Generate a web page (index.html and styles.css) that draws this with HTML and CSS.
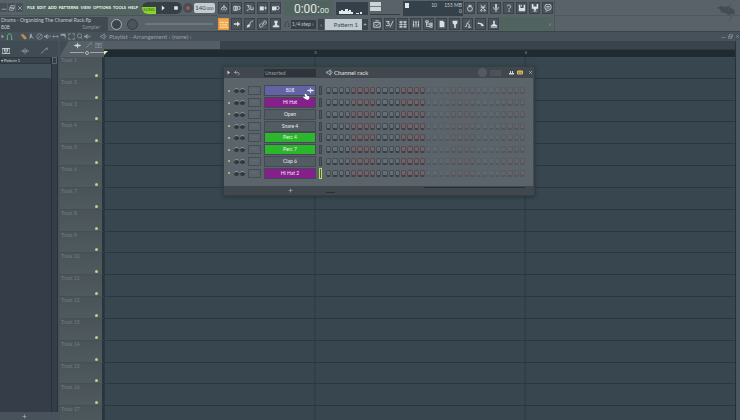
FILE: index.html
```
<!DOCTYPE html>
<html lang="en">
<head>
    <meta charset="UTF-8">
    <meta name="viewport" content="width=device-width, initial-scale=1.0">
    <title>Drums - Organizing The Channel Rack</title>
    <link rel="stylesheet" href="styles.css">
</head>
<body>
    <!-- shared icon shapes, all on a 10x10 grid -->
    <svg class="sprite" aria-hidden="true">
        <symbol id="i_metro" viewBox="0 0 10 10"><path d="M5 1v7M1 6l4-3 4 3M2 6l1 2M8 6L7 8"/></symbol>
        <symbol id="i_wait" viewBox="0 0 10 10"><path d="M1 3h4v5H1zM3 3v5"/><circle cx="7" cy="5" r="2"/></symbol>
        <symbol id="i_count" viewBox="0 0 10 10"><path d="M1 2h3L3 4c2 0 2 4-2 4M6 2v5M6 7h3V4"/></symbol>
        <symbol id="i_keys" viewBox="0 0 10 10"><path class="solid" d="M1 3h5v5H1z"/><path d="M7 5h3M8 3v4"/></symbol>
        <symbol id="i_loop" viewBox="0 0 10 10"><path class="solid" d="M0 3h5v5H0z"/><circle cx="7" cy="5" r="2"/></symbol>
        <symbol id="i_bars" viewBox="0 0 10 10"><path d="M0 3h5M6 3h4M0 6h2M3 6h6M0 9h10"/></symbol>
        <symbol id="i_arrow" viewBox="0 0 10 10"><path class="solid" d="M1 4h4V2l4 3-4 3V6H1z"/></symbol>
        <symbol id="i_slide" viewBox="0 0 10 10"><path d="M1 9c3 0 4-2 4-4s1-3 4-4"/><path class="solid" d="M1 7l3-2 1 3-3 1z"/></symbol>
        <symbol id="i_link" viewBox="0 0 10 10"><path d="M4 6l3-3M3 4L1 6c-1 2 1 4 3 2l2-2M4 4l2-2c2-2 4 0 3 2L7 6"/></symbol>
        <symbol id="i_stamp" viewBox="0 0 10 10"><path class="solid" d="M3 1h4v3H6l1 3h2v2H1V7h2l1-3H3z"/></symbol>
        <symbol id="i_power" viewBox="0 0 10 10"><circle cx="5" cy="6" r="3"/><path d="M5 1v3M3 2h4"/></symbol>
        <symbol id="i_cut" viewBox="0 0 10 10"><path d="M2 1l5 6M8 1L3 7M2 4h6"/><circle cx="3" cy="8" r="1"/><circle cx="7" cy="8" r="1"/></symbol>
        <symbol id="i_mic" viewBox="0 0 10 10"><path class="solid" d="M4 0h2v6H4z"/><path d="M2 4c0 4 6 4 6 0M5 7v3"/></symbol>
        <symbol id="i_help" viewBox="0 0 10 10"><path d="M3 3c0-3 5-2 4 1L5 6v1M5 8v2"/></symbol>
        <symbol id="i_save" viewBox="0 0 10 10"><path class="solid" d="M1 1h2v4h4V1h2v8H1zM4 1h1v2H4z"/></symbol>
        <symbol id="i_saveas" viewBox="0 0 10 10"><path class="solid" d="M1 0h2v3h4V0h2v6H7l-2 3-2-3H1z"/><path d="M3 9h4"/></symbol>
        <symbol id="i_chat" viewBox="0 0 10 10"><circle cx="5" cy="4" r="4"/><path d="M3 3h4M3 5h4M4 8L2 10"/></symbol>
        <symbol id="i_list" viewBox="0 0 10 10"><path d="M1 3h8v6H1zM3 1h4M3 6l2 1 3-3"/></symbol>
        <symbol id="i_piano" viewBox="0 0 10 10"><path d="M0 2h4L2 4h2v3H0M9 1L5 9"/></symbol>
        <symbol id="i_rack" viewBox="0 0 10 10"><path d="M1 2h3v1H1zM6 2h3v1H6zM1 5h3v1H1zM6 5h3v1H6zM1 8h3v1H1zM6 8h3v1H6z"/></symbol>
        <symbol id="i_mixer" viewBox="0 0 10 10"><path d="M2 1v8M5 1v8M8 1v8M1 6h2M4 3h2M7 6h2"/></symbol>
        <symbol id="i_tree" viewBox="0 0 10 10"><path d="M1 1h3v2H1zM2 3v5h4M2 5h4M6 4h3v2H6zM6 7h3v2H6z"/></symbol>
        <symbol id="i_page" viewBox="0 0 10 10"><path class="solid" d="M2 1h4l2 2v6H2z"/></symbol>
        <symbol id="i_plug" viewBox="0 0 10 10"><path class="solid" d="M2 1h6v3L6 6v4H4V6L2 4z"/></symbol>
        <symbol id="i_brush" viewBox="0 0 10 10"><path d="M7 1L4 4l3 2-1 3M4 4L3 8H1M5 9h4"/></symbol>
        <symbol id="i_tempo" viewBox="0 0 10 10"><path class="solid" d="M1 3l5 1 3 3-3 1-2-3-3 0z"/></symbol>
        <symbol id="i_touch" viewBox="0 0 10 10"><path class="solid" d="M4 1h2v4l3 2v1H1V7l3-2z"/><path d="M1 9h8"/></symbol>
        <symbol id="i_magnet" viewBox="0 0 10 10"><path d="M2 9V5c0-5 6-5 6 0v4M1 9h2M7 9h2"/></symbol>
        <symbol id="i_pencil" viewBox="0 0 10 10"><path class="solid" d="M1 3l3-2 5 5v3H6z"/></symbol>
        <symbol id="i_paint" viewBox="0 0 10 10"><path class="solid" d="M3 1l2 0 1 4 3 4-4-3-3 3z"/></symbol>
        <symbol id="i_none" viewBox="0 0 10 10"><circle cx="5" cy="5" r="4"/><path d="M2 8l6-6"/></symbol>
        <symbol id="i_mute" viewBox="0 0 10 10"><path class="solid" d="M0 4h2l3-3v8L2 6H0z"/><path d="M7 3v4M9 4v2"/></symbol>
        <symbol id="i_slip" viewBox="0 0 10 10"><path d="M1 5h8M3 3L1 5l2 2M7 3l2 2-2 2"/></symbol>
        <symbol id="i_slice" viewBox="0 0 10 10"><path class="solid" d="M1 1h7v8L6 4H1z"/></symbol>
        <symbol id="i_select" viewBox="0 0 10 10"><path d="M1 4V1h3M6 1h3v3M9 6v3H6M4 9H1V6"/></symbol>
        <symbol id="i_zoom" viewBox="0 0 10 10"><circle cx="5" cy="4" r="3"/><path d="M7 6l2 3"/></symbol>
        <symbol id="i_wave" viewBox="0 0 10 10"><path d="M0 5h10M3 3v4M5 1v8M7 3v4"/></symbol>
        <symbol id="i_line" viewBox="0 0 10 10"><path d="M1 8l3-2 2-3 3-1"/><circle cx="9" cy="2" r="1"/></symbol>
        <symbol id="i_clip" viewBox="0 0 10 10"><path d="M0 2h10v6H0zM3 2v4M5 2v6M7 2v4"/></symbol>
        <symbol id="i_horn" viewBox="0 0 10 10"><path d="M1 4h2l3-3v8L3 6H1zM7 3l2 2-2 2"/></symbol>
        <symbol id="i_play" viewBox="0 0 10 10"><path class="solid" d="M3 1l5 4-5 4z"/></symbol>
        <symbol id="i_stop" viewBox="0 0 10 10"><path class="solid" d="M2 2h6v6H2z"/></symbol>
        <symbol id="i_back" viewBox="0 0 10 10"><path d="M4 1L1 4l3 3M1 4h5c3 0 3 4 1 5"/></symbol>
        <symbol id="i_min" viewBox="0 0 10 10"><path d="M1 7h8"/></symbol>
        <symbol id="i_max" viewBox="0 0 10 10"><path d="M3 1h6v5H3zM1 4h6v5H1z"/></symbol>
        <symbol id="i_close" viewBox="0 0 10 10"><path d="M2 2l6 6M8 2L2 8"/></symbol>
        <symbol id="i_plus" viewBox="0 0 10 10"><path d="M5 1v8M1 5h8"/></symbol>
        <symbol id="i_graph" viewBox="0 0 10 10"><path class="solid" d="M0 9V6h2V2h2v4h2V2h2v4h2v3z"/></symbol>
    </svg>

    <header class="toolbar">
        <div class="toolbar_left">
            <div class="toolbar_row">
                <div class="window_buttons" data-icons="min max close"></div>
                <nav class="menu">
                    <button>FILE</button><button>EDIT</button><button>ADD</button><button>PATTERNS</button><button>VIEW</button><button>OPTIONS</button><button>TOOLS</button><button>HELP</button>
                </nav>
                <div class="transport">
                    <button class="mode">SONG</button>
                    <button aria-label="Play"><svg><use href="#i_play"/></svg></button>
                    <button aria-label="Stop"><svg><use href="#i_stop"/></svg></button>
                </div>
                <button class="record" aria-label="Record"></button>
                <div class="tempo">140<small>.000</small></div>
            </div>
            <div class="toolbar_row">
                <div class="hint">
                    <div>Drums - Organizing The Channel Rack.flp</div>
                    <div class="hint_line"><span>808</span><span class="hint_type">Sampler</span></div>
                </div>
                <span class="knob knob_volume"></span>
                <span class="knob"></span>
                <div class="pitch"></div>
            </div>
        </div>
        <div class="toolbar_mid">
            <div class="toolbar_row">
                <div class="tools" data-icons="metro wait count keys loop"></div>
                <div class="clock">0:00:<span>00</span></div>
                <svg class="scope" viewBox="0 0 32 13"><path d="M3 12V9h2V8h2v1h2V7h3v2h1V8h2v2h2v2zM20 12v-1h3v1zM24 12v-2h2v2z"/></svg>
                <div class="master"><i></i></div>
                <div class="cpu">
                    <i></i><span>10</span><span>155 MB<br>0</span>
                </div>
                <div class="tools" data-icons="power cut mic help save saveas chat"></div>
            </div>
            <div class="toolbar_row">
                <div class="tools tools_record" data-icons="bars arrow slide link stamp"></div>
                <svg class="snap_icon"><use href="#i_magnet"/></svg>
                <select class="snap" aria-label="Snap"><option>1/4 step ›</option></select>
                <button class="step_button" aria-label="Previous pattern">‹</button>
                <button class="pattern">Pattern 1</button>
                <button class="step_button" aria-label="Add pattern">+</button>
                <div class="tools tools_view" data-icons="list piano rack mixer tree page plug brush tempo touch"></div>
                <div class="news">‹</div>
            </div>
        </div>
        <div class="toolbar_logo">
            <svg viewBox="0 0 20 20"><path d="M1 6l4-2 4 1 4-1 2 2 3 2 1 4-3 0-3 1-4-2-4-1-1-3z"/><path class="stalk" d="M15 1l-3 8M16 14l-3 6"/></svg>
        </div>
    </header>

    <div class="playlist_bar">
        <div class="playlist_tools" data-icons="play magnet pencil paint none mute slip slice select zoom mute"></div>
        <svg class="playlist_horn"><use href="#i_horn"/></svg>
        <span class="playlist_title">Playlist - Arrangement › (none) ›</span>
        <div class="playlist_window" data-icons="min max close"></div>
    </div>

    <main class="workspace">
        <aside class="picker">
            <div class="picker_tabs" data-icons="clip wave line"></div>
            <div class="picker_body">
                <div class="picker_list">
                    <button class="picker_item">▾ Pattern 1</button>
                    <div class="picker_preview"></div>
                </div>
                <div class="picker_scroll"><i></i></div>
            </div>
            <button class="picker_add" aria-label="Add"><svg><use href="#i_plus"/></svg></button>
        </aside>

        <section class="playlist">
            <div class="playlist_head">
                <div class="corner">
                    <div class="corner_icons" data-icons="wave line clip"></div>
                    <div class="corner_zoom"><i></i><b></b><i></i></div>
                </div>
                <div class="playlist_top">
                    <div class="scroll_track"><i></i></div>
                    <div class="ruler"><span></span><span>3</span><span>5</span></div>
                </div>
            </div>
            <div class="tracks" id="tracks"></div>
        </section>
        <div class="side_scroll"></div>
    </main>

    <section class="rack">
        <header class="rack_header">
            <svg><use href="#i_play"/></svg>
            <svg class="rack_back"><use href="#i_back"/></svg>
            <select class="rack_filter" aria-label="Channel filter"><option>Unsorted</option></select>
            <svg class="rack_horn"><use href="#i_horn"/></svg>
            <h1>Channel rack</h1>
            <span class="rack_swing"></span>
            <span class="rack_swing_bar"></span>
            <svg class="rack_graph"><use href="#i_graph"/></svg>
            <svg class="rack_steps"><use href="#i_clip"/></svg>
            <button aria-label="Close"><svg><use href="#i_close"/></svg></button>
        </header>
        <div class="rack_body" id="channels"></div>
        <footer class="rack_footer">
            <button aria-label="Add channel"><svg><use href="#i_plus"/></svg></button>
            <div class="rack_scroll"><i></i><b></b></div>
        </footer>
        <svg class="rack_wave"><use href="#i_wave"/></svg>
        <svg class="pointer" viewBox="0 0 10 10"><path d="M2 2l2-1 2 3 3 1v3L7 10 4 9 0 6l1-1 3 1z"/></svg>
    </section>

    <script>
        const channels = [
            { name: '808', color: 'blue' },
            { name: 'Hi Hat', color: 'purple' },
            { name: 'Open', color: 'grey' },
            { name: 'Snare 4', color: 'grey' },
            { name: 'Perc 4', color: 'green' },
            { name: 'Perc 7', color: 'green' },
            { name: 'Clap 6', color: 'grey' },
            { name: 'Hi Hat 2', color: 'purple', selected: true }
        ];

        // toolbars list their icons in data-icons
        document.querySelectorAll('[data-icons]').forEach(box => {
            box.innerHTML = box.dataset.icons.split(' ').map(name =>
                `<button aria-label="${name}"><svg><use href="#i_${name}"/></svg></button>`
            ).join('');
        });

        let tracks = '';
        for (let i = 1; i <= 17; i++) {
            tracks += `<div class="track">
                <div class="track_head"><span>Track ${i}</span><i></i></div>
                <div class="track_lane"></div>
            </div>`;
        }
        document.getElementById('tracks').innerHTML = tracks;

        document.getElementById('channels').innerHTML = channels.map(ch => {
            let steps = '';
            for (let i = 0; i < 32; i++) {
                const red = i % 8 > 3 ? ' step_red' : '';
                const off = i > 15 ? ' step_off' : '';
                steps += `<button class="step${red}${off}" aria-label="Step ${i + 1}"></button>`;
            }
            return `<div class="channel">
                <i class="led"></i>
                <i class="dial"></i>
                <i class="dial"></i>
                <span class="mixer_slot">---</span>
                <button class="channel_name channel_${ch.color}">${ch.name}</button>
                <i class="channel_select${ch.selected ? ' selected' : ''}"></i>
                <div class="steps">${steps}</div>
            </div>`;
        }).join('');
    </script>
</body>
</html>
```
FILE: styles.css
```
* { box-sizing: border-box; }

body
{
    margin: 0;
    height: 100vh;
    display: flex;
    flex-direction: column;
    overflow: hidden;
    background-color: #37464f;
    color: #c3cbd0;
    font-family: Lato, "Open Sans", sans-serif;
    font-size: 6px;
    line-height: 8px;
}

button, select
{
    margin: 0;
    padding: 0;
    border: none;
    background: none;
    color: inherit;
    font: inherit;
    appearance: none;
}

svg
{
    display: block;
    width: 8px;
    height: 8px;
    flex: none;
    fill: none;
    stroke: currentColor;
    stroke-width: 1;
}

.solid { fill: currentColor; stroke: none; }

.sprite
{
    position: absolute;
    width: 0;
    height: 0;
}

/* top toolbar */

.toolbar
{
    display: flex;
    flex: none;
    height: 32px;
    background-color: #596269;
    border-bottom: 1px solid #3b444b;
}

.toolbar_left { width: 217px; }

.toolbar_row
{
    display: flex;
    align-items: center;
    height: 16px;
}

.toolbar_left .toolbar_row:first-child { border-bottom: 1px solid #4b545b; }

.window_buttons
{
    display: flex;
    gap: 1px;
    width: 25px;
}

.window_buttons button
{
    display: grid;
    place-items: center;
    width: 7px;
    height: 9px;
    background-color: #465057;
}

.window_buttons svg { width: 6px; height: 6px; }

.menu
{
    display: flex;
    flex: none;
    align-items: center;
    justify-content: space-between;
    width: 115px;
    height: 14px;
    padding: 0 2px;
    background-color: #50635f;
    color: #f2f6f4;
    font-size: 4px;
    font-weight: 700;
}

.transport
{
    display: flex;
    flex: none;
    align-items: center;
    width: 40px;
    height: 12px;
    margin-left: 2px;
    border-radius: 6px;
    background-color: #363f46;
    color: #e2e7e9;
    overflow: hidden;
}

.transport button
{
    display: grid;
    place-items: center;
    width: 13px;
    height: 12px;
}

.transport svg { width: 6px; height: 6px; }

.transport .mode
{
    width: 14px;
    height: 7px;
    align-self: flex-end;
    background-color: #86d62c;
    color: #2f5a10;
    font-size: 4px;
    line-height: 6px;
}

.record
{
    width: 10px;
    height: 10px;
    margin-left: 1px;
    border: 3px solid #474f56;
    border-radius: 50%;
    background-color: #a45357;
}

.tempo
{
    width: 21px;
    height: 10px;
    margin-left: 1px;
    border-radius: 2px;
    background-color: #c3cdd1;
    color: #39434a;
    font-size: 6px;
    line-height: 10px;
    text-align: center;
}

.tempo small { font-size: 4px; }

.hint
{
    width: 108px;
    height: 15px;
    padding-left: 1px;
    background-color: #414a51;
    font-size: 5px;
    line-height: 7px;
    white-space: nowrap;
}

.hint_line
{
    display: flex;
    justify-content: space-between;
    padding-right: 8px;
}

.hint_type { color: #8e989e; }

.knob
{
    width: 11px;
    height: 11px;
    margin-left: 3px;
    border: 1px solid #343c43;
    border-radius: 50%;
    background-color: #4b545b;
}

.knob + .knob { margin-left: 5px; }

.knob_volume { border-color: #aab4b9; background-color: #3b444b; }

.pitch
{
    flex: 1;
    height: 2px;
    margin: 0 4px 0 7px;
    background-color: #6d777e;
}

.tools
{
    display: flex;
    gap: 2px;
    margin-left: 1px;
}

.tools button
{
    display: grid;
    place-items: center;
    width: 11px;
    height: 12px;
    border: 1px solid #3a434a;
    background-color: #49535a;
    color: #d9dfe2;
}

.tools_record button:first-child
{
    border-color: #e5953c;
    background-color: #f3a64a;
    color: #fff0c8;
}

.clock
{
    width: 49px;
    height: 15px;
    margin: 0 3px 0 3px;
    padding-left: 6px;
    background-color: #50635f;
    color: #e0e6e3;
    font-family: Roboto, sans-serif;
    font-size: 12px;
    line-height: 16px;
    text-align: center;
    white-space: nowrap;
}

.clock span { font-size: 8px; }

.scope
{
    width: 32px;
    height: 13px;
    background-color: #35414a;
    fill: #e2e8ea;
    stroke: none;
}

.master
{
    width: 30px;
    height: 13px;
    margin: 0 3px 0 2px;
    border-bottom: 1px solid #333d45;
}

.master i
{
    display: block;
    width: 11px;
    height: 9px;
    border-top: 4px solid #cdd4d7;
    border-bottom: 4px solid #cdd4d7;
    background-color: #6d7980;
}

.cpu
{
    display: flex;
    justify-content: space-between;
    width: 60px;
    height: 15px;
    padding: 1px;
    background-color: #35414a;
    font-size: 5px;
    line-height: 6px;
    text-align: right;
}

.cpu i
{
    width: 4px;
    height: 5px;
    margin: 1px;
    background-color: #e2e8ea;
}

.cpu span:nth-child(2) { margin-left: 14px; }

.snap_icon { width: 6px; height: 6px; margin: 0 1px 0 3px; color: #353e45; }

.snap
{
    width: 25px;
    height: 9px;
    background-color: #363f46;
    font-size: 5px;
    padding-left: 1px;
}

.step_button
{
    width: 6px;
    height: 11px;
    margin-left: 2px;
    background-color: #3c454c;
    line-height: 9px;
}

.pattern
{
    width: 37px;
    height: 11px;
    margin-left: 1px;
    padding-right: 4px;
    background-color: #bfcbd1;
    color: #39444c;
    font-size: 6px;
    line-height: 11px;
    text-align: right;
    white-space: nowrap;
}

.pattern + .step_button { margin-left: 0; }

.tools_view { margin-left: 3px; }

.news
{
    width: 52px;
    height: 14px;
    margin-left: 1px;
    padding-right: 1px;
    background-color: #50635f;
    line-height: 13px;
    text-align: right;
}

.toolbar_logo
{
    flex: 1;
    display: flex;
    justify-content: flex-end;
    margin-left: 1px;
    padding-right: 4px;
    border-left: 1px solid #4c555c;
    background-image: linear-gradient(#4f585f, #4f585f);
    background-position: 0 15px;
    background-repeat: no-repeat;
    background-size: 100% 1px;
}

.toolbar_logo svg
{
    width: 20px;
    height: 20px;
    margin-top: 2px;
    fill: #424c53;
    stroke: none;
}

.toolbar_logo .stalk { stroke: #4b555c; }

/* playlist title bar */

.playlist_bar
{
    display: flex;
    align-items: center;
    flex: none;
    height: 9px;
    background-color: #47515a;
    color: #96a0a6;
}

.playlist_tools
{
    display: flex;
    flex: none;
    gap: 1px;
    width: 97px;
}

.playlist_tools svg { width: 7px; height: 7px; }
.playlist_tools button:nth-child(1) svg { width: 5px; }
.playlist_tools button:nth-child(2) { color: #62e08f; margin-right: 6px; }
.playlist_tools button:nth-child(3) { color: #b98d58; }

.playlist_horn { width: 7px; height: 7px; margin: 0 2px 0 3px; }

.playlist_title
{
    flex: 1;
    font-size: 6px;
    white-space: nowrap;
}

.playlist_window { display: flex; gap: 2px; }
.playlist_window svg { width: 5px; height: 5px; }

/* pattern picker */

.workspace
{
    display: flex;
    flex: 1;
    min-height: 0;
}

.picker
{
    display: flex;
    flex-direction: column;
    width: 60px;
    border-right: 2px solid #48525a;
    background-color: #353e48;
}

.picker_tabs
{
    display: flex;
    align-items: center;
    justify-content: space-between;
    height: 16px;
    padding: 3px 10px 0 2px;
    background-color: #414b53;
    color: #8c979e;
}

.picker_tabs button:first-child { color: #e3e8ea; }

.picker_body
{
    display: flex;
    flex: 1;
}

.picker_list { flex: 1; }

.picker_item
{
    display: block;
    width: 100%;
    height: 7px;
    background-color: #39434b;
    border: 1px solid #2d373f;
    color: #d5dadd;
    font-size: 4px;
    line-height: 5px;
    text-align: left;
}

.picker_preview
{
    height: 14px;
    background-color: #43515a;
}

.picker_scroll
{
    width: 7px;
    border-left: 1px solid #29323a;
    border-right: 1px solid #29323a;
}

.picker_scroll i
{
    display: block;
    height: 7px;
    border: 1px solid #5a656d;
}

.picker_add
{
    display: flex;
    align-items: center;
    height: 8px;
    padding-left: 22px;
    background-color: #48525a;
}

.picker_add svg { width: 5px; height: 5px; }

/* playlist */

.playlist
{
    display: flex;
    flex-direction: column;
    flex: 1;
    min-width: 0;
    overflow: hidden;
}

.playlist_head
{
    display: flex;
    flex: none;
    height: 16px;
}

.corner
{
    width: 44px;
    padding-left: 10px;
    background: linear-gradient(120deg, #414b53 7px, #566066 8px);
    color: #899399;
}

.corner_icons
{
    display: flex;
    justify-content: space-between;
    padding: 1px 2px 0 4px;
}

.corner_icons svg { width: 7px; height: 7px; }
.corner_icons button:first-child { color: #edf1f2; }

.corner_zoom
{
    display: flex;
    align-items: center;
    gap: 1px;
    height: 7px;
}

.corner_zoom i { flex: 1; height: 1px; background-color: #9da7ac; }
.corner_zoom b { width: 4px; height: 4px; border: 1px solid #adb6ba; border-radius: 50%; }

.playlist_top { flex: 1; }

.scroll_track
{
    height: 9px;
    padding-right: 8px;
    background-color: #3a434b;
    border-bottom: 1px solid #303a41;
}

.scroll_track i
{
    display: block;
    width: 116px;
    max-width: 100%;
    height: 8px;
    background-color: #555e66;
}

.ruler
{
    display: grid;
    grid-template-columns: repeat(3, 1fr);
    height: 7px;
    background-color: #202b31;
    color: #98a4ab;
    font-size: 4px;
    line-height: 5px;
}

.ruler span:first-child
{
    width: 4px;
    height: 4px;
    margin-top: 1px;
    background-color: #e3e5b5;
    clip-path: polygon(0 0, 100% 0, 0 100%);
}

.tracks
{
    display: grid;
    grid-auto-rows: 1fr;
    flex: 1;
    min-height: 0;
    margin-bottom: -8px;
}

.track { display: flex; min-height: 0; }

.track_head
{
    display: flex;
    justify-content: space-between;
    width: 44px;
    padding: 0 4px 0 1px;
    border-right: 2px solid #2a343b;
    border-bottom: 1px solid #444f55;
    background: linear-gradient(#495358, #4f5a5e);
    color: #747f84;
    font-size: 5px;
    line-height: 7px;
}

.track_head i
{
    align-self: flex-end;
    width: 3px;
    height: 3px;
    margin-bottom: 1px;
    border-radius: 50%;
    background-color: #a9dc83;
}

.track_lane
{
    flex: 1;
    border-bottom: 1px solid #293740;
    background-image: linear-gradient(90deg, #2b3840 1px, transparent 1px);
    background-size: calc(100% / 3) 100%;
}

.side_scroll
{
    width: 5px;
    border-left: 1px solid #283138;
    background-color: #4b555d;
}

/* channel rack window */

.rack
{
    position: absolute;
    left: 223px;
    top: 66px;
    width: 312px;
    border: 1px solid #343e45;
    background-color: #40484e;
    box-shadow: 0 1px 4px rgba(0,0,0,0.3);
}

.rack_header
{
    display: flex;
    align-items: center;
    height: 11px;
    padding: 0 1px 0 2px;
    color: #cfd5d8;
}

.rack_header svg { width: 5px; height: 5px; }
.rack_header .rack_back { width: 6px; height: 6px; margin-left: 3px; }

.rack_filter
{
    width: 52px;
    height: 8px;
    margin-left: 24px;
    padding-left: 1px;
    background-color: #2d353b;
    color: #969fa4;
    font-size: 5px;
}

.rack_header .rack_horn { width: 7px; height: 7px; margin-left: 10px; }

.rack_header h1
{
    flex: 1;
    margin: 0 0 0 1px;
    color: #e0e5e7;
    font-size: 6px;
    font-weight: 400;
}

.rack_swing
{
    width: 9px;
    height: 9px;
    border-radius: 50%;
    background-color: #535b61;
}

.rack_swing_bar
{
    width: 11px;
    height: 6px;
    margin: 0 7px 0 3px;
    background-color: #4c5459;
}

.rack_header .rack_graph { width: 7px; margin-right: 2px; }

.rack_header .rack_steps
{
    width: 6px;
    margin-right: 5px;
    color: #e5c256;
    stroke-width: 2;
}

.rack_body
{
    display: grid;
    grid-auto-rows: 1fr;
    height: 108px;
    margin-right: 1px;
    padding: 7px 8px 7px 4px;
    background-color: #5b646a;
}

.channel
{
    display: flex;
    align-items: center;
    min-height: 0;
}

.led
{
    width: 2px;
    height: 2px;
    margin-right: 4px;
    border-radius: 50%;
    background-color: #a7d47c;
}

.dial
{
    width: 5px;
    height: 5px;
    margin-right: 1px;
    border-radius: 50%;
    background-color: #30383e;
    border-top: 1px solid #8c969b;
}

.mixer_slot
{
    width: 13px;
    height: 9px;
    margin: 0 3px 0 2px;
    border: 1px solid #454e54;
    color: #859097;
    font-size: 4px;
    line-height: 6px;
    text-align: center;
}

.channel_name
{
    width: 52px;
    height: 11px;
    border: 1px solid #424b52;
    color: #e9edef;
    font-size: 5px;
    line-height: 9px;
}

.channel_blue { background-color: #6262a5; }
.channel_purple { background-color: #861f8b; }
.channel_green { background-color: #2db62d; }
.channel_grey { background-color: #535c63; }

.channel_select
{
    width: 3px;
    height: 9px;
    margin: 0 4px 0 3px;
    border: 1px solid #3b444a;
    background-color: #4d565c;
}

.channel_select.selected
{
    height: 11px;
    border-color: #b4e04a;
}

.steps
{
    display: grid;
    grid-template-columns: repeat(32, 1fr);
    column-gap: 1px;
    flex: 1;
}

.step
{
    height: 7px;
    border: 1px solid #444d53;
    border-bottom-width: 2px;
    border-bottom-color: #363f45;
    border-radius: 2px;
    background-color: #666f75;
}

.step_red { border-color: #5d484e; border-bottom-color: #463c42; background-color: #6a666b; }
.step_off { border-color: #565f65; border-bottom-color: #50595f; background-color: #5f686e; }
.step_off.step_red { border-color: #5a595f; border-bottom-color: #56545a; background-color: #61666b; }

.rack_footer
{
    display: flex;
    height: 9px;
}

.rack_footer button { width: 98px; padding-left: 64px; }
.rack_footer svg { width: 5px; height: 5px; }

.rack_scroll
{
    flex: 1;
    margin-right: 9px;
    padding-top: 1px;
}

.rack_scroll i
{
    display: block;
    width: 50%;
    height: 1px;
    margin-left: auto;
    background-color: #283138;
}

.rack_scroll b
{
    display: block;
    width: 9px;
    height: 1px;
    margin: 4px 0 0 4px;
    background-color: #283138;
}

/* mouse pointer and drag handle over the first channel */

.rack_wave
{
    position: absolute;
    left: 83px;
    top: 20px;
    width: 7px;
    height: 7px;
    color: #ffffff;
}

.pointer
{
    position: absolute;
    left: 79px;
    top: 26px;
    width: 7px;
    height: 7px;
    fill: #ffffff;
    stroke: none;
}
```
